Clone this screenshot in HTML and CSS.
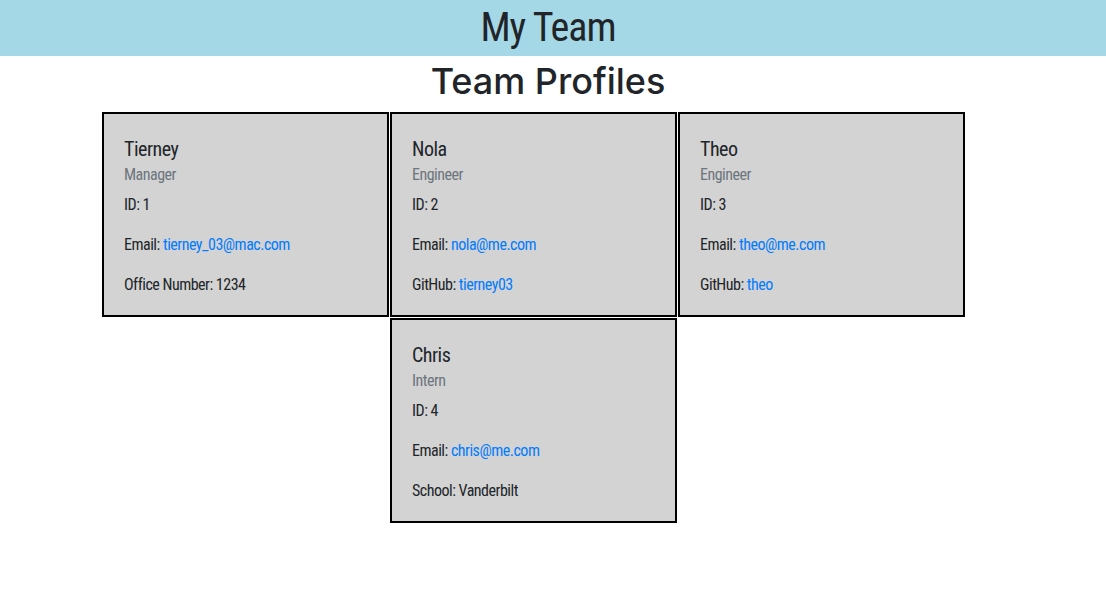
FILE: index.html
```html
<!DOCTYPE html>
<html>
<head>
    <meta charset="utf-8">
    <title>My Team</title>
    <link rel="stylesheet" href="styles.css">
</head>
<body>
    <header class="banner">
        <h1>My Team</h1>
    </header>
    <h2 class="page-title">Team Profiles</h2>
    <div class="team">
        <div class="card">
            <h5 class="card-title">Tierney</h5>
            <h6 class="card-role">Manager</h6>
            <p>ID: 1</p>
            <p>Email: <a href="mailto:tierney_03@mac.com">tierney_03@mac.com</a></p>
            <p>Office Number: 1234</p>
        </div>
        <div class="card">
            <h5 class="card-title">Nola</h5>
            <h6 class="card-role">Engineer</h6>
            <p>ID: 2</p>
            <p>Email: <a href="mailto:nola@me.com">nola@me.com</a></p>
            <p>GitHub: <a href="#">tierney03</a></p>
        </div>
        <div class="card">
            <h5 class="card-title">Theo</h5>
            <h6 class="card-role">Engineer</h6>
            <p>ID: 3</p>
            <p>Email: <a href="mailto:theo@me.com">theo@me.com</a></p>
            <p>GitHub: <a href="#">theo</a></p>
        </div>
        <div class="card">
            <h5 class="card-title">Chris</h5>
            <h6 class="card-role">Intern</h6>
            <p>ID: 4</p>
            <p>Email: <a href="mailto:chris@me.com">chris@me.com</a></p>
            <p>School: Vanderbilt</p>
        </div>
    </div>
</body>
</html>
```

FILE: styles.css
```css
body {
    margin: 0;
    background: #fff;
    color: #212529;
    font-family: "Roboto Condensed", "Liberation Sans Narrow", "DejaVu Sans Condensed", sans-serif;
    font-stretch: condensed;
}
.banner {
    background: #a5d8e6;
    height: 56px;
    padding-right: 10px;
    text-align: center;
}
.banner h1 {
    margin: 0;
    font-size: 40px;
    font-weight: normal;
    letter-spacing: -1px;
    line-height: 56px;
}
.page-title {
    margin: 3px 0 9px;
    padding-right: 10px;
    text-align: center;
    font-family: Inter, "Noto Sans", sans-serif;
    font-stretch: normal;
    font-size: 36px;
    font-weight: 500;
    line-height: 44px;
}
.team {
    display: flex;
    flex-wrap: wrap;
    justify-content: center;
    gap: 1px;
    width: 863px;
    margin-left: 102px;
}
.card {
    box-sizing: border-box;
    width: 287px;
    height: 205px;
    padding: 23px 20px 0;
    background: lightgray;
    border: 2px solid #000;
    letter-spacing: -0.5px;
}
.card-title {
    margin: 0;
    font-size: 20px;
    font-weight: normal;
    line-height: 24px;
}
.card-role {
    margin: 2px 0 0;
    color: #6c757d;
    font-size: 16px;
    font-weight: normal;
    line-height: 24px;
}
.card p {
    margin: 16px 0 0;
    font-size: 16px;
    line-height: 24px;
}
.card-role + p {
    margin-top: 6px;
}
.card a {
    color: #007bff;
    text-decoration: none;
}
```
